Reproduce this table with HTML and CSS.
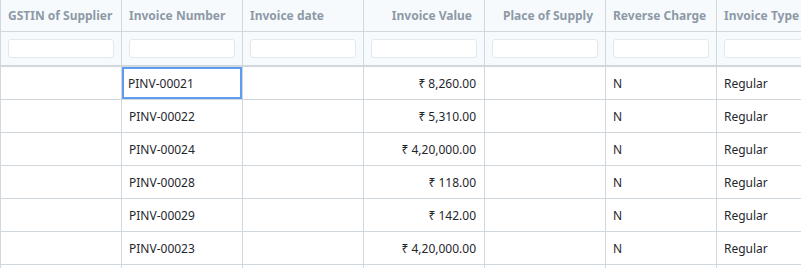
FILE: index.html
```html
<!DOCTYPE html>
<html>
<head>
<meta charset="utf-8">
<link rel="stylesheet" href="styles.css">
</head>
<body>
<div class="frame">
<div class="grid">
  <div class="row head">
    <div class="cell">GSTIN of Supplier</div>
    <div class="cell">Invoice Number</div>
    <div class="cell">Invoice date</div>
    <div class="cell right">Invoice Value</div>
    <div class="cell right">Place of Supply</div>
    <div class="cell narrow">Reverse Charge</div>
    <div class="cell">Invoice Type</div>
  </div>
  <div class="row filter">
    <div class="cell"><input class="fi" type="text"></div>
    <div class="cell"><input class="fi" type="text"></div>
    <div class="cell"><input class="fi" type="text"></div>
    <div class="cell"><input class="fi" type="text"></div>
    <div class="cell"><input class="fi" type="text"></div>
    <div class="cell narrow"><input class="fi" type="text"></div>
    <div class="cell"><input class="fi" type="text"></div>
  </div>
  <div class="row body">
    <div class="cell"></div>
    <div class="cell focus">PINV-00021</div>
    <div class="cell"></div>
    <div class="cell right">₹ 8,260.00</div>
    <div class="cell"></div>
    <div class="cell narrow">N</div>
    <div class="cell">Regular</div>
  </div>
  <div class="row body">
    <div class="cell"></div>
    <div class="cell">PINV-00022</div>
    <div class="cell"></div>
    <div class="cell right">₹ 5,310.00</div>
    <div class="cell"></div>
    <div class="cell narrow">N</div>
    <div class="cell">Regular</div>
  </div>
  <div class="row body">
    <div class="cell"></div>
    <div class="cell">PINV-00024</div>
    <div class="cell"></div>
    <div class="cell right">₹ 4,20,000.00</div>
    <div class="cell"></div>
    <div class="cell narrow">N</div>
    <div class="cell">Regular</div>
  </div>
  <div class="row body">
    <div class="cell"></div>
    <div class="cell">PINV-00028</div>
    <div class="cell"></div>
    <div class="cell right">₹ 118.00</div>
    <div class="cell"></div>
    <div class="cell narrow">N</div>
    <div class="cell">Regular</div>
  </div>
  <div class="row body">
    <div class="cell"></div>
    <div class="cell">PINV-00029</div>
    <div class="cell"></div>
    <div class="cell right">₹ 142.00</div>
    <div class="cell"></div>
    <div class="cell narrow">N</div>
    <div class="cell">Regular</div>
  </div>
  <div class="row body">
    <div class="cell"></div>
    <div class="cell">PINV-00023</div>
    <div class="cell"></div>
    <div class="cell right">₹ 4,20,000.00</div>
    <div class="cell"></div>
    <div class="cell narrow">N</div>
    <div class="cell">Regular</div>
  </div>
  <div class="row body">
    <div class="cell"></div>
    <div class="cell"></div>
    <div class="cell"></div>
    <div class="cell"></div>
    <div class="cell"></div>
    <div class="cell narrow"></div>
    <div class="cell"></div>
  </div>
</div>
</div>
</body>
</html>
```
FILE: styles.css
```css
html, body {
  margin: 0;
  padding: 0;
  background: #ffffff;
  overflow: hidden;
}
body {
  font-family: "Noto Sans", "DejaVu Sans", sans-serif;
  font-size: 12px;
  color: #1f272e;
}
.frame {
  width: 801px;
  height: 268px;
  overflow: hidden;
}
.grid {
  width: 900px;
}
.row {
  display: flex;
  border-left: 1px solid #d1d8dd;
  border-bottom: 1px solid #d1d8dd;
}
.cell {
  box-sizing: border-box;
  width: 121px;
  flex: none;
  border-right: 1px solid #d1d8dd;
  padding: 0 7px;
  display: flex;
  align-items: center;
  white-space: nowrap;
  overflow: hidden;
}
.cell.narrow {
  width: 111px;
}
.cell.right {
  justify-content: flex-end;
}
.head {
  background: #f7fafc;
  height: 32px;
  box-sizing: border-box;
}
.head .cell {
  font-size: 12px;
  font-weight: 700;
  color: #8d99a6;
  padding-left: 7px;
}
.head .cell.right {
  padding-right: 12px;
}
.filter {
  background: #f7fafc;
  height: 35px;
  box-sizing: border-box;
  border-bottom: 2px solid #d1d8dd;
}
.filter .cell {
  padding: 0 7px;
}
.fi {
  box-sizing: border-box;
  width: 106px;
  height: 19px;
  margin: 0;
  border: 1px solid #e3e8ec;
  border-radius: 3px;
  background: #ffffff;
  padding: 0 4px;
  font: inherit;
}
.narrow .fi {
  width: 96px;
}
.body {
  height: 33px;
  box-sizing: border-box;
}
.body .cell.right {
  padding-right: 8px;
}
.focus {
  box-shadow: inset 0 0 0 2px #5e9cf0;
  padding-left: 6px;
}
```
